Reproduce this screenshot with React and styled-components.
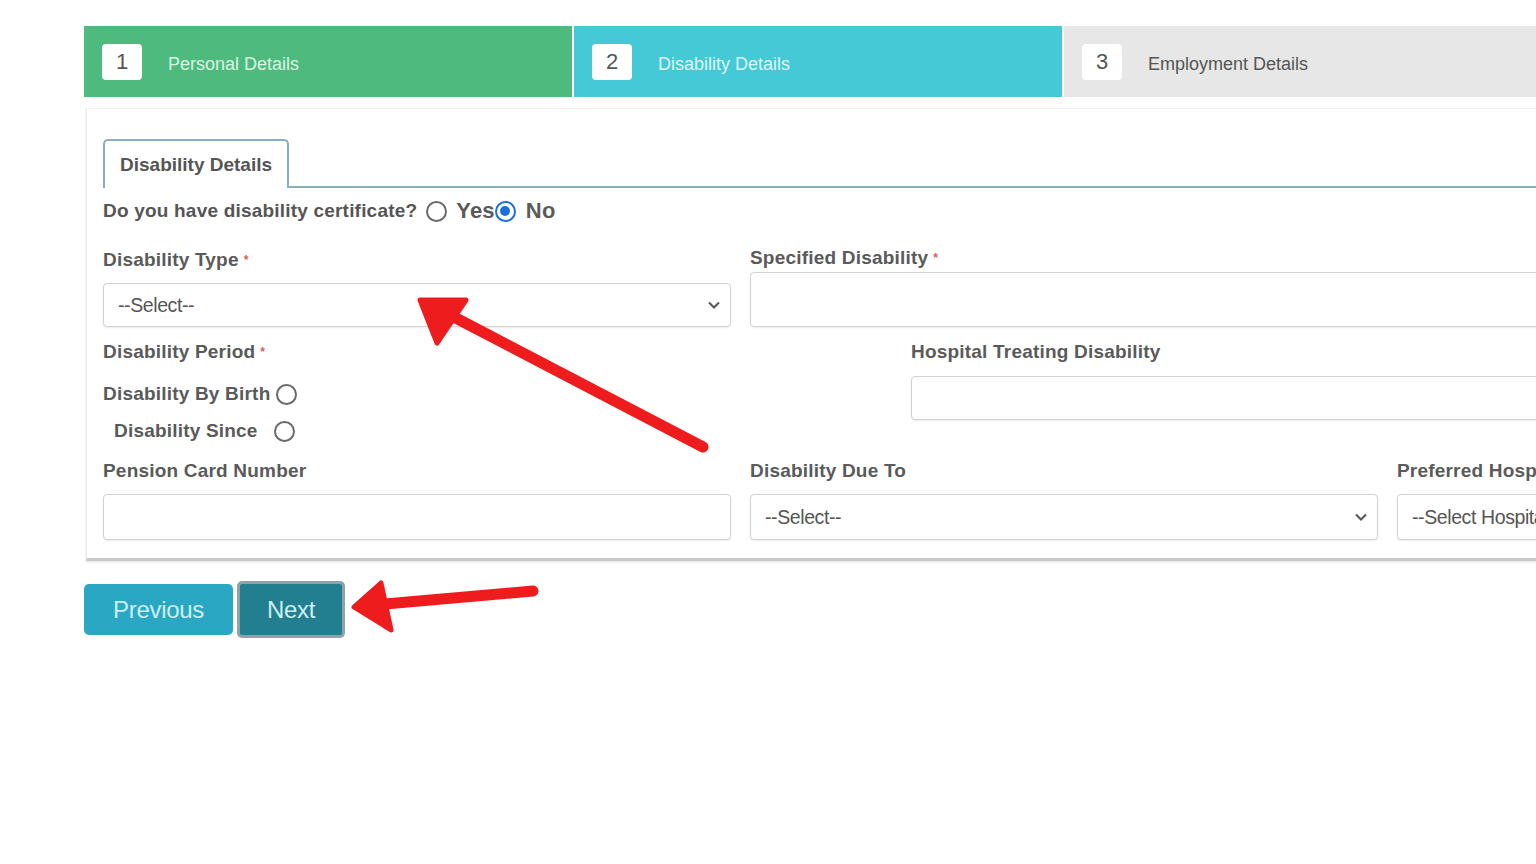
import React from 'react';
import styled, { createGlobalStyle } from 'styled-components';

const GlobalStyle = createGlobalStyle`
  html, body {
    margin: 0;
    padding: 0;
    background: #ffffff;
    overflow: hidden;
  }
  body {
    font-family: "Liberation Sans", Arial, sans-serif;
  }
`;

const Page = styled.div`
  position: relative;
  width: 2000px;
  height: 864px;
  padding: 26px 0 0 84px;
  box-sizing: border-box;
`;

const Stepper = styled.div`
  display: flex;
  gap: 2px;
  height: 71px;
`;

const Step = styled.div`
  width: ${({ $wide }) => ($wide ? '560px' : '488px')};
  background: ${({ $bg }) => $bg};
  display: flex;
  align-items: center;
  padding-left: 18px;
  gap: 26px;
  box-sizing: border-box;
  font-size: 18px;
  color: ${({ $fg }) => $fg};
`;

const StepText = styled.span`
  margin-top: 6px;
`;

const StepNum = styled.span`
  width: 40px;
  height: 36px;
  border-radius: 4px;
  background: #ffffff;
  color: #555;
  font-size: 22px;
  display: flex;
  align-items: center;
  justify-content: center;
`;

const Card = styled.div`
  margin: 11px 0 0 2px;
  width: 1900px;
  border-left: 1px solid #e8e8e8;
  border-top: 1px solid #f0f0f0;
  border-bottom: 3px solid #c9c9c9;
  box-shadow: 0 1px 2px rgba(0, 0, 0, 0.12);
  padding: 30px 0 18px 16px;
  box-sizing: border-box;
  color: #5a5a5a;
`;

const TabRow = styled.div`
  display: flex;
  border-bottom: 2px solid #86b0c2;
`;

const Tab = styled.div`
  height: 49px;
  padding: 0 15px;
  display: flex;
  align-items: center;
  border: 2px solid #86b0c2;
  border-bottom: none;
  border-radius: 5px 5px 0 0;
  font-size: 19px;
  font-weight: bold;
  color: #555;
  margin-bottom: -2px;
  background: #fff;
  box-sizing: border-box;
`;

const Question = styled.div`
  margin-top: 11px;
  display: flex;
  align-items: center;
  font-size: 19px;
  font-weight: bold;
  letter-spacing: 0.2px;
  line-height: 24px;
  color: #555;
`;

const Option = styled.span`
  display: inline-flex;
  align-items: center;
  font-size: 22px;
  font-weight: bold;
  color: #5a5a5a;
  margin-left: ${({ $gap }) => $gap || 0}px;
`;

const Radio = styled.span`
  width: 21px;
  height: 21px;
  border-radius: 50%;
  border: 2px solid ${({ $checked }) => ($checked ? '#1a6fd8' : '#6a6a6a')};
  box-sizing: border-box;
  display: inline-flex;
  align-items: center;
  justify-content: center;
  flex-shrink: 0;
  margin: 0 ${({ $after }) => $after || 0}px 0 ${({ $before }) => $before || 0}px;
  &::after {
    content: '';
    display: ${({ $checked }) => ($checked ? 'block' : 'none')};
    width: 10px;
    height: 10px;
    border-radius: 50%;
    background: #1a6fd8;
  }
`;

const Row = styled.div`
  display: grid;
  grid-template-columns: ${({ $cols }) => $cols};
  column-gap: 19px;
  align-items: ${({ $align }) => $align || 'start'};
  margin-top: ${({ $top }) => $top}px;
`;

const Field = styled.div`
  display: flex;
  flex-direction: column;
  gap: ${({ $gap }) => $gap}px;
`;

const Label = styled.label`
  font-size: 19px;
  font-weight: bold;
  letter-spacing: 0.2px;
  line-height: 22px;
  color: #5a5a5a;
  white-space: nowrap;
`;

const Req = styled.span`
  color: #e05a5a;
  font-size: 12px;
  vertical-align: top;
  margin-left: 5px;
`;

const Box = styled.div`
  height: ${({ $h }) => $h}px;
  border: 1px solid #d2d2d2;
  border-radius: 4px;
  box-shadow: 0 1px 2px rgba(0, 0, 0, 0.08);
  background: #fff;
  box-sizing: border-box;
  display: flex;
  align-items: center;
  justify-content: space-between;
  padding: 0 9px 0 14px;
  font-size: 19.5px;
  color: #555;
  letter-spacing: -0.4px;
  overflow: hidden;
  white-space: nowrap;
`;

const PeriodList = styled.div`
  display: flex;
  flex-direction: column;
  gap: 11px;
  margin-top: 18px;
`;

const PeriodItem = styled.div`
  display: flex;
  align-items: center;
  height: 26px;
  font-size: 19px;
  font-weight: bold;
  letter-spacing: 0.2px;
  color: #5a5a5a;
  padding-left: ${({ $indent }) => $indent || 0}px;
`;

const Actions = styled.div`
  display: flex;
  align-items: center;
  gap: 4px;
  margin-top: 20px;
`;

const Button = styled.button`
  height: ${({ $dark }) => ($dark ? '57px' : '51px')};
  width: ${({ $dark }) => ($dark ? '108px' : '149px')};
  padding: 0;
  border: ${({ $dark }) => ($dark ? '3px solid #8fa2a6' : 'none')};
  border-radius: 5px;
  background: ${({ $dark }) => ($dark ? '#217f90' : '#2aa8c3')};
  color: #cdeef4;
  font-family: "Liberation Sans", Arial, sans-serif;
  font-size: 24px;
  letter-spacing: -0.3px;
  cursor: pointer;
`;

const Overlay = styled.svg`
  position: absolute;
  left: 0;
  top: 0;
  pointer-events: none;
`;

const Chevron = () => (
  <svg width="14" height="10" viewBox="0 0 14 10">
    <path d="M2 2.5 L7 7.5 L12 2.5" fill="none" stroke="#555" strokeWidth="2" />
  </svg>
);

export default function App() {
  return (
    <>
      <GlobalStyle />
      <Page>
        <Stepper>
          <Step $bg="#4dbb7e" $fg="#d9f5e2">
            <StepNum>1</StepNum>
            <StepText>Personal Details</StepText>
          </Step>
          <Step $bg="#46c9d6" $fg="#dcf5f8">
            <StepNum>2</StepNum>
            <StepText>Disability Details</StepText>
          </Step>
          <Step $bg="#e7e7e7" $fg="#555" $wide>
            <StepNum>3</StepNum>
            <StepText>Employment Details</StepText>
          </Step>
        </Stepper>

        <Card>
          <TabRow>
            <Tab>Disability Details</Tab>
          </TabRow>

          <Question>
            Do you have disability certificate?
            <Radio $before={9} $after={9} />
            <Option>Yes</Option>
            <Radio $checked />
            <Option $gap={10}>No</Option>
          </Question>

          <Row $cols="628px 1fr" $align="end" $top={24}>
            <Field $gap={12}>
              <Label>
                Disability Type<Req>*</Req>
              </Label>
              <Box $h={44}>
                --Select--
                <Chevron />
              </Box>
            </Field>
            <Field $gap={3}>
              <Label>
                Specified Disability<Req>*</Req>
              </Label>
              <Box $h={55} />
            </Field>
          </Row>

          <Row $cols="789px 1fr" $top={14}>
            <Field $gap={0}>
              <Label>
                Disability Period<Req>*</Req>
              </Label>
              <PeriodList>
                <PeriodItem>
                  Disability By Birth
                  <Radio $before={6} />
                </PeriodItem>
                <PeriodItem $indent={11}>
                  Disability Since
                  <Radio $before={16} />
                </PeriodItem>
              </PeriodList>
            </Field>
            <Field $gap={13}>
              <Label>Hospital Treating Disability</Label>
              <Box $h={44} />
            </Field>
          </Row>

          <Row $cols="628px 628px 628px" $top={16}>
            <Field $gap={12}>
              <Label>Pension Card Number</Label>
              <Box $h={46} />
            </Field>
            <Field $gap={12}>
              <Label>Disability Due To</Label>
              <Box $h={46}>
                --Select--
                <Chevron />
              </Box>
            </Field>
            <Field $gap={12}>
              <Label>Preferred Hospital</Label>
              <Box $h={46}>
                --Select Hospital--
                <Chevron />
              </Box>
            </Field>
          </Row>
        </Card>

        <Actions>
          <Button>Previous</Button>
          <Button $dark>Next</Button>
        </Actions>

        <Overlay width="1536" height="864" viewBox="0 0 1536 864">
          <line x1="703" y1="447" x2="450" y2="315" stroke="#ee1c1c" strokeWidth="11" strokeLinecap="round" />
          <polygon points="420,300 466,300 437,343" fill="#ee1c1c" stroke="#ee1c1c" strokeWidth="5" strokeLinejoin="round" />
          <line x1="533" y1="591" x2="385" y2="604" stroke="#ee1c1c" strokeWidth="11" strokeLinecap="round" />
          <polygon points="354,607 381,583 391,630" fill="#ee1c1c" stroke="#ee1c1c" strokeWidth="5" strokeLinejoin="round" />
        </Overlay>
      </Page>
    </>
  );
}
